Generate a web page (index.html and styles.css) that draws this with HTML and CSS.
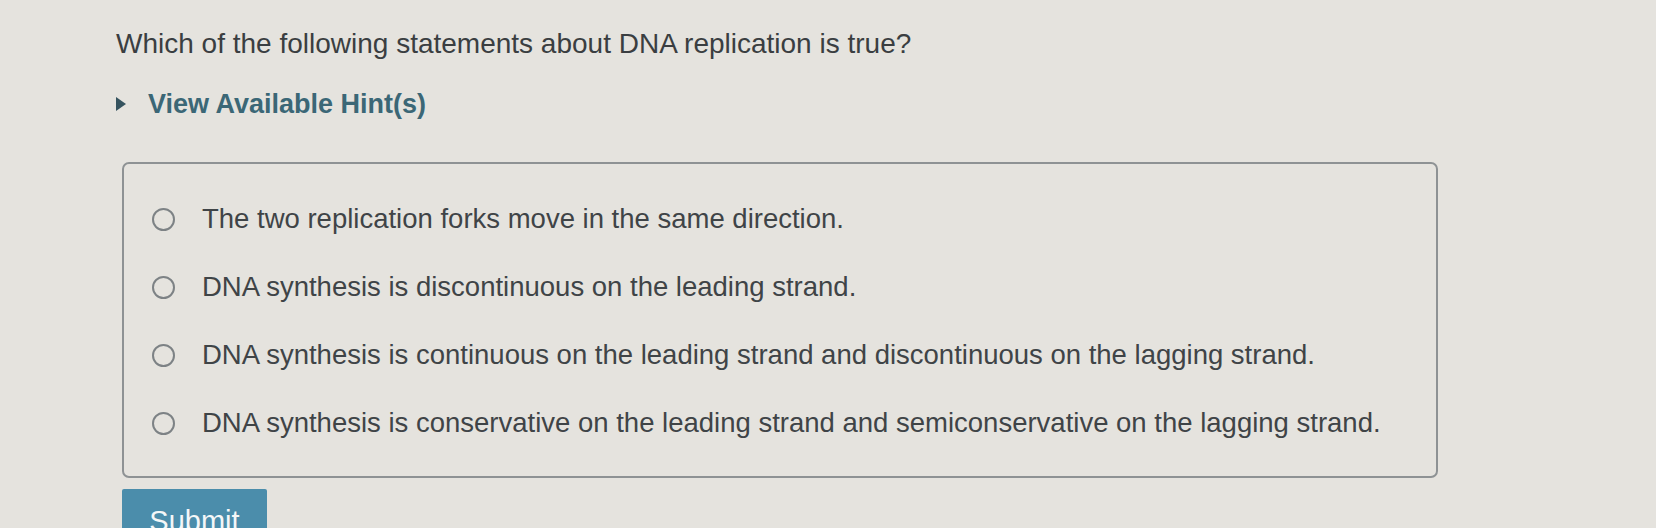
FILE: index.html
```html
<!DOCTYPE html>
<html lang="en">
<head>
    <meta charset="UTF-8">
    <title>Question</title>
    <link rel="stylesheet" href="styles.css">
</head>
<body>
    <div class="question">
        <h1 class="question-title">Which of the following statements about DNA replication is true?</h1>

        <div class="hint-toggle">
            <span class="hint-arrow"></span>
            <span>View Available Hint(s)</span>
        </div>

        <div class="answer-box">
            <label class="option">
                <span class="radio"></span>
                <span>The two replication forks move in the same direction.</span>
            </label>
            <label class="option">
                <span class="radio"></span>
                <span>DNA synthesis is discontinuous on the leading strand.</span>
            </label>
            <label class="option">
                <span class="radio"></span>
                <span>DNA synthesis is continuous on the leading strand and discontinuous on the lagging strand.</span>
            </label>
            <label class="option">
                <span class="radio"></span>
                <span>DNA synthesis is conservative on the leading strand and semiconservative on the lagging strand.</span>
            </label>
        </div>

        <button class="btn-submit">Submit</button>
    </div>
</body>
</html>
```

FILE: styles.css
```css
:root {
    --bg: #e5e3de;
    --text: #3f4447;
    --hint: #3b6776;
    --border: #8e9294;
    --submit: #4b8dab;
}

* {
    margin: 0;
    padding: 0;
    box-sizing: border-box;
}

body {
    background: var(--bg);
    font-family: "Liberation Sans", Arial, sans-serif;
    color: var(--text);
    overflow: hidden;
}

.question {
    padding: 27px 0 0 116px;
}

.question-title {
    font-size: 28px;
    font-weight: normal;
    line-height: 34px;
    color: #3a3e41;
}

.hint-toggle {
    display: flex;
    align-items: center;
    gap: 22px;
    margin-top: 27px;
    font-size: 27px;
    font-weight: bold;
    color: var(--hint);
    line-height: 32px;
}

.hint-arrow {
    width: 0;
    height: 0;
    border-top: 7px solid transparent;
    border-bottom: 7px solid transparent;
    border-left: 10px solid #35535e;
}

.answer-box {
    margin: 42px 0 0 6px;
    width: 1316px;
    height: 316px;
    border: 2px solid var(--border);
    border-radius: 7px;
    padding: 38px 0 0 28px;
    display: flex;
    flex-direction: column;
    gap: 34px;
}

.option {
    display: flex;
    align-items: center;
    gap: 27px;
    font-size: 27.5px;
    line-height: 34px;
}

.radio {
    width: 23px;
    height: 23px;
    border: 2px solid #7d8285;
    border-radius: 50%;
    flex-shrink: 0;
}

.btn-submit {
    margin: 11px 0 0 6px;
    width: 145px;
    height: 52px;
    background: var(--submit);
    border: none;
    border-radius: 2px;
    color: #f4f7f8;
    font-family: "Liberation Sans", Arial, sans-serif;
    font-size: 29px;
    padding-top: 12px;
}
```
